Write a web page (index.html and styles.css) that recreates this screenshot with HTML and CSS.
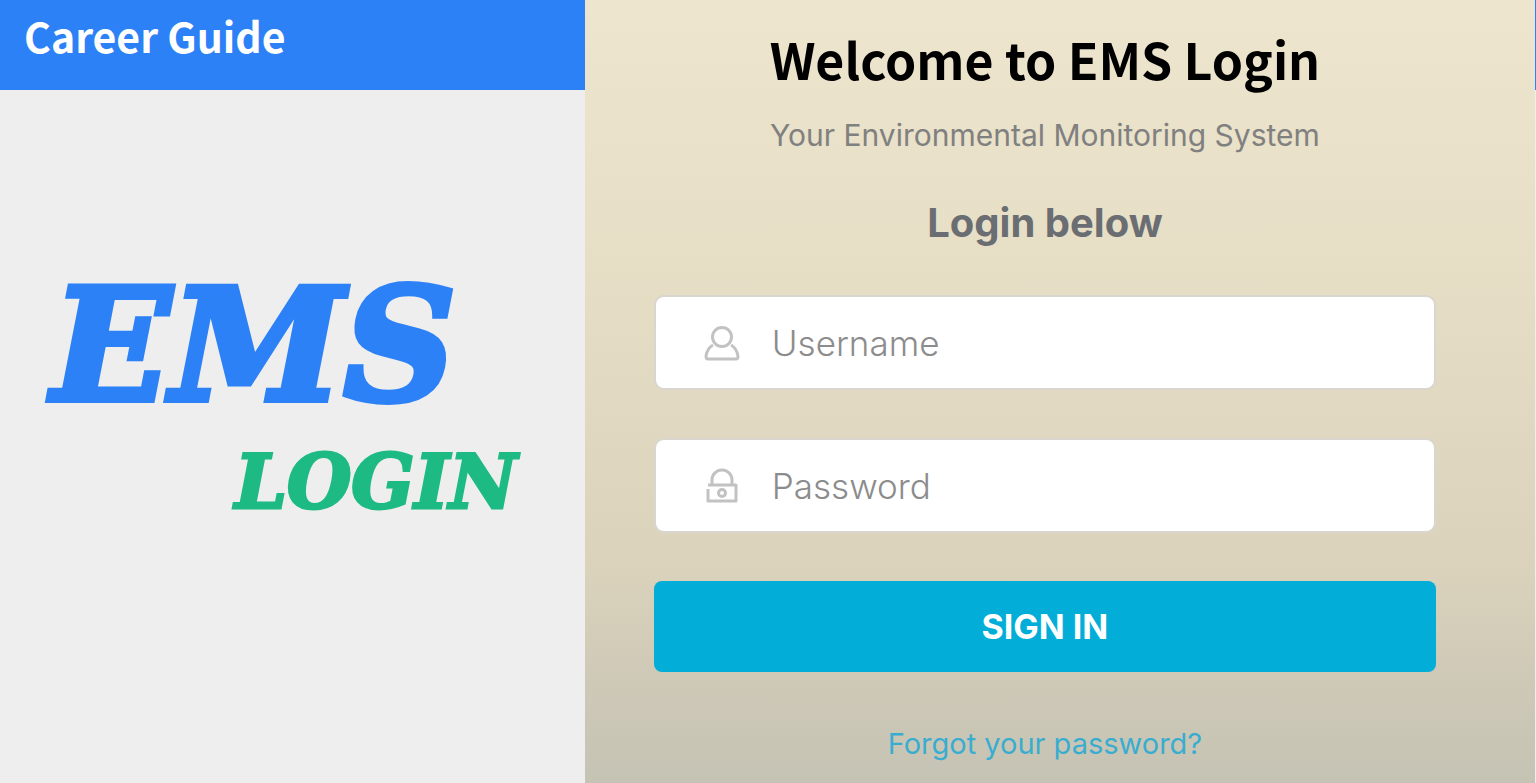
FILE: index.html
```
<!DOCTYPE html>
<html lang="en">
<head>
    <meta charset="UTF-8">
    <meta name="viewport" content="width=device-width, initial-scale=1.0">
    <title>EMS Login - Career Guide</title>
    <link rel="stylesheet" href="styles.css">
</head>
<body>
    <div class="page">
        <aside class="brand">
            <header class="brand-header">Career Guide</header>
            <div class="logo">
                <div class="logo-main">EMS</div>
                <div class="logo-sub">LOGIN</div>
            </div>
        </aside>

        <main class="login">
            <h1>Welcome to EMS Login</h1>
            <p class="subtitle">Your Environmental Monitoring System</p>
            <h2>Login below</h2>

            <form class="login-form">
                <div class="field">
                    <label for="username" aria-label="Username">
                        <svg viewBox="0 0 36 36" fill="none" stroke="#c2c2c2" stroke-width="3" stroke-linejoin="round">
                            <circle cx="18" cy="12" r="9.5"/>
                            <path d="M9 20C5 22 3 26 2 31Q2 34 4 34H32Q34 34 34 31C33 26 31 22 27 20"/>
                        </svg>
                    </label>
                    <input type="text" id="username" placeholder="Username">
                </div>

                <div class="field">
                    <label for="password" aria-label="Password">
                        <svg viewBox="0 0 36 36" fill="none" stroke="#c2c2c2" stroke-width="3" stroke-linejoin="round">
                            <path d="M8 17V12a10 10 0 0 1 20 0V17"/>
                            <path d="M4 17H32V33H4V21"/>
                            <circle cx="18" cy="25" r="3.5"/>
                        </svg>
                    </label>
                    <input type="password" id="password" placeholder="Password">
                </div>

                <button type="submit">SIGN IN</button>
            </form>

            <a class="forgot" href="#">Forgot your password?</a>
        </main>
    </div>
</body>
</html>
```
FILE: styles.css
```
* {
    box-sizing: border-box;
}

body {
    margin: 0;
    font-family: Inter, "Liberation Sans", sans-serif;
    background: linear-gradient(#2d81f7 90px, #eeeeee 90px);
}

.page {
    display: grid;
    grid-template-columns: 38.1% 1fr;
    min-height: 100vh;
    padding-right: 1px;
}

.brand {
    background: #eeeeee;
}

.brand-header {
    height: 90px;
    padding: 5px 24px;
    background: #2d81f7;
    color: #fff;
    font-family: "Noto Sans CJK SC", "Open Sans", sans-serif;
    font-size: 41px;
    font-weight: 700;
    line-height: 60px;
}

.logo {
    padding: 164px 68px 0 52px;
    font-family: "DejaVu Serif", serif;
    font-style: italic;
    font-weight: 700;
}

.logo-main {
    color: #2d81f7;
    -webkit-text-stroke: 6px #2d81f7;
    font-size: 156px;
    line-height: 184px;
}

.logo-sub {
    color: #1dba84;
    -webkit-text-stroke: 3px #1dba84;
    font-size: 74px;
    line-height: 88px;
    text-align: right;
}

.login {
    display: flex;
    flex-direction: column;
    align-items: center;
    padding: 28px 99px 16px 69px;
    background: linear-gradient(#ede5cd 0%, #e7dec6 33%, #dad2bb 73%, #cfc9b7 86%, #c5c3b4 100%);
}

h1 {
    margin: 0;
    color: #000;
    font-family: "Noto Sans CJK SC", "Open Sans", sans-serif;
    font-size: 50px;
    font-weight: 700;
    line-height: 60px;
}

.subtitle {
    margin: 27px 0 0;
    color: #808080;
    font-size: 30px;
    line-height: 40px;
}

h2 {
    margin: 44px 0 0;
    color: #6a6d72;
    font-size: 40px;
    font-weight: 700;
    line-height: 48px;
}

.login-form {
    display: flex;
    flex-direction: column;
    gap: 48px;
    width: 100%;
    margin-top: 48px;
}

.field {
    display: flex;
    align-items: center;
    gap: 32px;
    height: 95px;
    padding: 0 48px;
    background: #fff;
    border: 2px solid #d9d6d0;
    border-radius: 10px;
}

.field label {
    width: 36px;
    height: 36px;
}

.field svg {
    display: block;
}

.field input {
    flex: 1;
    min-width: 0;
    padding: 0;
    border: none;
    outline: none;
    background: none;
    color: #555;
    font: 300 35px/44px Inter, "Liberation Sans", sans-serif;
}

.field input::placeholder {
    color: #8c8c8c;
}

button {
    height: 91px;
    border: none;
    border-radius: 8px;
    background: #02aed8;
    color: #fff;
    font: 700 34px/40px Inter, "Liberation Sans", sans-serif;
    cursor: pointer;
}

.forgot {
    margin-top: 52px;
    color: #39add0;
    font-size: 29px;
    line-height: 40px;
    text-decoration: none;
}
```
